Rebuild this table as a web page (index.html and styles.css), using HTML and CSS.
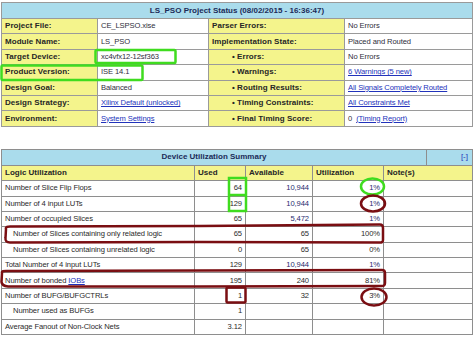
FILE: index.html
```html
<!DOCTYPE html>
<html>
<head>
<meta charset="utf-8">
<link rel="stylesheet" href="styles.css">
</head>
<body>
<div class="page">
  <table class="status">
    <colgroup><col class="c1"><col class="c2"><col class="c3"><col class="c4"></colgroup>
    <tr class="head"><td colspan="4">LS_PSO Project Status (08/02/2015 - 16:36:47)</td></tr>
    <tr><td class="lab">Project File:</td><td class="val">CE_LSPSO.xise</td><td class="lab">Parser Errors:</td><td class="val">No Errors</td></tr>
    <tr><td class="lab">Module Name:</td><td class="val">LS_PSO</td><td class="lab">Implementation State:</td><td class="val">Placed and Routed</td></tr>
    <tr><td class="lab">Target Device:</td><td class="val">xc4vfx12-12sf363</td><td class="lab sub">&bull; Errors:</td><td class="val">No Errors</td></tr>
    <tr><td class="lab">Product Version:</td><td class="val">ISE 14.1</td><td class="lab sub">&bull; Warnings:</td><td class="val"><a>6 Warnings (5 new)</a></td></tr>
    <tr><td class="lab">Design Goal:</td><td class="val">Balanced</td><td class="lab sub">&bull; Routing Results:</td><td class="val"><a>All Signals Completely Routed</a></td></tr>
    <tr><td class="lab">Design Strategy:</td><td class="val"><a>Xilinx Default (unlocked)</a></td><td class="lab sub">&bull; Timing Constraints:</td><td class="val"><a>All Constraints Met</a></td></tr>
    <tr><td class="lab">Environment:</td><td class="val"><a>System Settings</a></td><td class="lab sub">&bull; Final Timing Score:</td><td class="val">0 &nbsp;<a>(Timing Report)</a></td></tr>
  </table>

  <table class="util">
    <colgroup><col class="u1"><col class="u2"><col class="u3"><col class="u4"><col class="u5"></colgroup>
    <tr class="head"><td colspan="5" class="headcell"><div class="headsplit"><span class="title">Device Utilization Summary</span><span class="toggle">[-]</span></div></td></tr>
    <tr class="colhead"><td>Logic Utilization</td><td>Used</td><td>Available</td><td>Utilization</td><td>Note(s)</td></tr>
    <tr><td>Number of Slice Flip Flops</td><td class="num">64</td><td class="num blue">10,944</td><td class="num blue">1%</td><td></td></tr>
    <tr><td>Number of 4 input LUTs</td><td class="num">129</td><td class="num blue">10,944</td><td class="num blue">1%</td><td></td></tr>
    <tr><td>Number of occupied Slices</td><td class="num">65</td><td class="num blue">5,472</td><td class="num blue">1%</td><td></td></tr>
    <tr><td class="ind">Number of Slices containing only related logic</td><td class="num">65</td><td class="num">65</td><td class="num">100%</td><td></td></tr>
    <tr><td class="ind">Number of Slices containing unrelated logic</td><td class="num">0</td><td class="num">65</td><td class="num">0%</td><td></td></tr>
    <tr><td>Total Number of 4 input LUTs</td><td class="num">129</td><td class="num blue">10,944</td><td class="num blue">1%</td><td></td></tr>
    <tr><td>Number of bonded <a>IOBs</a></td><td class="num">195</td><td class="num">240</td><td class="num">81%</td><td></td></tr>
    <tr><td>Number of BUFG/BUFGCTRLs</td><td class="num">1</td><td class="num">32</td><td class="num">3%</td><td></td></tr>
    <tr><td class="ind">Number used as BUFGs</td><td class="num">1</td><td></td><td></td><td></td></tr>
    <tr><td>Average Fanout of Non-Clock Nets</td><td class="num">3.12</td><td></td><td></td><td></td></tr>
  </table>

  <svg class="marks" width="474" height="338" viewBox="0 0 474 338">
    <g fill="none" stroke="#3fdc1f" stroke-width="2.5">
      <rect x="95.5" y="50" width="80" height="13" rx="1"/>
      <rect x="1.5" y="65.5" width="141" height="14.5" rx="1"/>
      <rect x="229" y="178" width="17" height="33"/>
      <line x1="229" y1="195" x2="246" y2="195"/>
      <ellipse cx="372.5" cy="186.5" rx="11.5" ry="8"/>
    </g>
    <g fill="none" stroke="#7a0e12" stroke-width="2.5">
      <ellipse cx="373" cy="203.5" rx="12" ry="8"/>
      <path d="M6 229 Q5 226 12 226.5 L200 226 L380 224.5 Q383 224.5 383 228 L383 240 Q383 243 379 242.5 L200 242 L10 242.5 Q5 242.5 5.5 238 Z"/>
      <path d="M2 273 Q1 270.5 8 271 L200 270.5 L382 270 Q385 270 385 273 L385 283 Q385 286.5 381 286 L200 286.5 L8 286.5 Q2 286 1.5 282 Z"/>
      <rect x="226.5" y="287.5" width="19" height="15" rx="1"/>
      <ellipse cx="374" cy="297" rx="12.5" ry="8.5"/>
    </g>
  </svg>
</div>
</body>
</html>
```
FILE: styles.css
```css
html, body {
  margin: 0;
  padding: 0;
  background: #ffffff;
}
.page {
  position: relative;
  width: 474px;
  height: 338px;
  padding: 2px 0 0 1px;
  box-sizing: border-box;
  font-family: "Liberation Sans", Arial, sans-serif;
  font-size: 7.6px;
  letter-spacing: -0.1px;
  color: #2a2a2a;
  overflow: hidden;
}
table {
  border-collapse: collapse;
  table-layout: fixed;
  width: 471px;
}
td {
  border: 1px solid #9a9a9a;
  padding: 0 3px;
  white-space: nowrap;
  overflow: hidden;
  height: 15.4px;
  box-sizing: border-box;
  line-height: 12px;
}
.status .c1 { width: 96px; }
.status .c2 { width: 111px; }
.status .c3 { width: 136px; }
.status .c4 { width: 128px; }
.head td {
  background: #aadcec;
  text-align: center;
  font-weight: bold;
  font-size: 8px;
  letter-spacing: 0;
  color: #1c2b58;
  height: 16px;
}
.lab {
  background: #f4f48c;
  font-weight: bold;
  font-size: 8px;
  letter-spacing: 0.05px;
  color: #262626;
}
.lab.sub { padding-left: 23px; }
.val { background: #ffffff; color: #2e2e3a; }
a {
  color: #2233bb;
  text-decoration: underline;
}
.util {
  margin-top: 22px;
}
.util td { border-color: #8e8e8e; }
.util .u1 { width: 193px; }
.util .u2 { width: 51px; }
.util .u3 { width: 67px; }
.util .u4 { width: 71px; }
.util .u5 { width: 89px; }
.headcell { padding: 0; }
.headsplit {
  display: flex;
  height: 100%;
  align-items: stretch;
}
.title {
  flex: 0 0 424px;
  display: flex;
  align-items: center;
  justify-content: center;
}
.toggle {
  flex: 1;
  border-left: 1px solid #8e8e8e;
  display: flex;
  align-items: center;
  justify-content: flex-end;
  padding-right: 4px;
  color: #2233bb;
  font-weight: normal;
}
.util .colhead td {
  background: #f4f48c;
  font-weight: bold;
  font-size: 8px;
  letter-spacing: 0;
  color: #262626;
}
.num { text-align: right; padding-right: 3px; }
.blue { color: #1f2a6e; }
.ind { padding-left: 11px; }
.marks {
  position: absolute;
  left: 0;
  top: 0;
  pointer-events: none;
}
```
